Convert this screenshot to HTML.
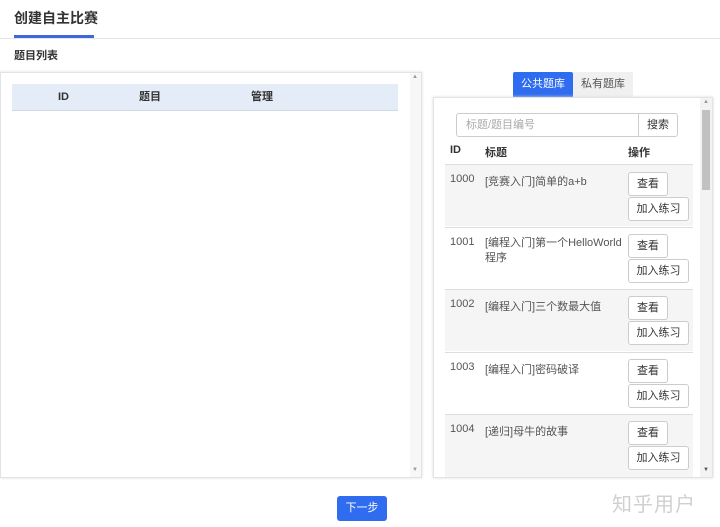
<!DOCTYPE html>
<html><head><meta charset="utf-8"><style>
*{box-sizing:border-box;margin:0;padding:0}
body{width:720px;height:527px;background:#fff;position:relative;overflow:hidden;font-family:"Liberation Sans","Noto Sans CJK SC",sans-serif;color:#333}
.a{position:absolute}
.btn{position:absolute;border:1px solid #ccc;border-radius:3px;background:#fff;font-size:11px;color:#333;text-align:center;line-height:22px}
.row{position:absolute;left:445px;width:248px;height:62px;border-top:1px solid #ddd;font-size:11px;color:#555}
.row.g{background:#f5f5f5}
</style></head><body>
<div class="a" style="left:14px;top:8px;font-size:14px;font-weight:bold;color:#333">创建自主比赛</div>
<div class="a" style="left:14px;top:35px;width:80px;height:3px;background:#3d68dc"></div>
<div class="a" style="left:0;top:38px;width:720px;height:1px;background:#e5e5e5"></div>
<div class="a" style="left:14px;top:47px;font-size:11px;font-weight:bold;color:#333">题目列表</div>

<div class="a" style="left:0;top:72px;width:422px;height:406px;border:1px solid #e3e3e3;box-shadow:0 0 3px #ddd"></div>
<div class="a" style="left:410px;top:73px;width:11px;height:404px;background:#f7f7f7"></div>
<div class="a" style="left:412px;top:74px;font-size:6px;color:#999">▲</div>
<div class="a" style="left:412px;top:467px;font-size:6px;color:#999">▼</div>
<div class="a" style="left:12px;top:84px;width:386px;height:27px;background:#e4ecf8;border-bottom:1px solid #d0d8e4;font-size:11px;font-weight:bold;line-height:26px">
<span class="a" style="left:46px">ID</span><span class="a" style="left:127px">题目</span><span class="a" style="left:239px">管理</span></div>

<div class="a" style="left:513px;top:72px;width:60px;height:25px;background:#2f6cf0;color:#fff;font-size:11px;text-align:center;line-height:25px;border-radius:2px 2px 0 0">公共题库</div>
<div class="a" style="left:573px;top:72px;width:60px;height:25px;background:#f0f0f0;color:#555;font-size:11px;text-align:center;line-height:25px">私有题库</div>

<div class="a" style="left:433px;top:97px;width:280px;height:381px;border:1px solid #e3e3e3;box-shadow:0 0 3px #ddd;overflow:hidden">
</div>
<div class="a" style="left:700px;top:98px;width:12px;height:379px;background:#f3f3f3"></div>
<div class="a" style="left:702px;top:110px;width:8px;height:80px;background:#c1c1c1"></div>
<div class="a" style="left:703px;top:99px;font-size:6px;color:#999">▲</div>
<div class="a" style="left:703px;top:467px;font-size:6px;color:#555">▼</div>

<div class="a" style="left:456px;top:113px;width:183px;height:24px;border:1px solid #ccc;border-radius:3px 0 0 3px;font-size:11px;color:#aaa;line-height:22px;padding-left:9px">标题/题目编号</div>
<div class="a" style="left:638px;top:113px;width:40px;height:24px;border:1px solid #ccc;border-radius:0 3px 3px 0;font-size:11px;line-height:22px;text-align:center">搜索</div>
<div class="a" style="left:450px;top:144px;font-size:11px;font-weight:bold">ID</div>
<div class="a" style="left:485px;top:144px;font-size:11px;font-weight:bold">标题</div>
<div class="a" style="left:628px;top:144px;font-size:11px;font-weight:bold">操作</div>

<div class="row g" style="top:164px"><span class="a" style="left:5px;top:8px">1000</span><span class="a" style="left:40px;top:8px">[竞赛入门]简单的a+b</span><div class="btn" style="left:183px;top:7px;width:40px;height:24px">查看</div><div class="btn" style="left:183px;top:32px;width:61px;height:24px">加入练习</div></div>
<div class="row" style="top:227px"><span class="a" style="left:5px;top:8px">1001</span><span class="a" style="left:40px;top:8px;width:140px;line-height:15px;word-break:break-all">[编程入门]第一个HelloWorld程序</span><div class="btn" style="left:183px;top:6px;width:40px;height:24px">查看</div><div class="btn" style="left:183px;top:31px;width:61px;height:24px">加入练习</div></div>
<div class="row g" style="top:289px"><span class="a" style="left:5px;top:8px">1002</span><span class="a" style="left:40px;top:8px">[编程入门]三个数最大值</span><div class="btn" style="left:183px;top:6px;width:40px;height:24px">查看</div><div class="btn" style="left:183px;top:31px;width:61px;height:24px">加入练习</div></div>
<div class="row" style="top:352px"><span class="a" style="left:5px;top:8px">1003</span><span class="a" style="left:40px;top:8px">[编程入门]密码破译</span><div class="btn" style="left:183px;top:6px;width:40px;height:24px">查看</div><div class="btn" style="left:183px;top:31px;width:61px;height:24px">加入练习</div></div>
<div class="row g" style="top:414px;height:63px"><span class="a" style="left:5px;top:8px">1004</span><span class="a" style="left:40px;top:8px">[递归]母牛的故事</span><div class="btn" style="left:183px;top:6px;width:40px;height:24px">查看</div><div class="btn" style="left:183px;top:31px;width:61px;height:24px">加入练习</div></div>

<div class="a" style="left:337px;top:496px;width:50px;height:25px;background:#2f6cf0;border-radius:3px;color:#fff;font-size:11px;text-align:center;line-height:25px">下一步</div>
<div class="a" style="left:612px;top:488px;font-size:20px;color:#d0d0d0;letter-spacing:1px">知乎用户</div>
</body></html>
